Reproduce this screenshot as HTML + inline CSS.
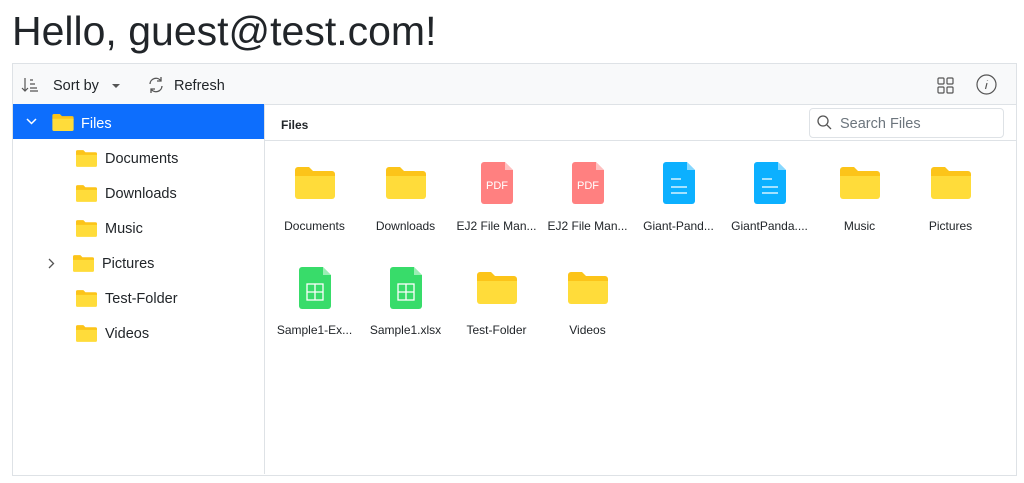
<!DOCTYPE html><html><head><style>
body{margin:0;width:1024px;height:483px;background:#fff;font-family:"Liberation Sans",sans-serif;position:relative;overflow:hidden}
.a{position:absolute}
h1{position:absolute;left:12px;top:7px;margin:0;font-size:41px;font-weight:400;color:#212529;line-height:48px}
.box{left:12px;top:63px;width:1003px;height:411px;border:1px solid #dee2e6}
.tb{left:13px;top:64px;width:1003px;height:40px;background:#f8f9fa;border-bottom:1px solid #dee2e6}
.t{font-size:14.5px;color:#212529}
.it{position:absolute;width:91px;text-align:center;font-size:12px;color:#212529}
.it svg{display:block;margin:0 auto}
</style></head><body>
<svg width="0" height="0" style="position:absolute"><defs>
<symbol id="f" viewBox="0 0 40 32"><path d="M0 3a3 3 0 0 1 3-3h11l4 4h19a3 3 0 0 1 3 3v4H0z" fill="#fcc419"/><path d="M0 9h40v20a3 3 0 0 1-3 3H3a3 3 0 0 1-3-3z" fill="#ffdc3a"/></symbol>
<symbol id="d" viewBox="0 0 32 42"><path d="M3 0h21l8 8v31a3 3 0 0 1-3 3H3a3 3 0 0 1-3-3V3a3 3 0 0 1 3-3z"/><path d="M24 0l8 8h-8z" fill="#fff" opacity=".5"/></symbol>
</defs></svg>
<h1>Hello, guest@test.com!</h1>
<div class="a box"></div>
<div class="a tb"></div>
<svg class="a" style="left:21px;top:77px" width="18" height="16" viewBox="0 0 18 16" fill="none" stroke="#555" stroke-width="1.2"><path d="M4 1v13M1 11l3 3 3-3M9 3h3M9 7h5M9 11h7M9 14h8"/></svg>
<div class="a t" style="left:53px;top:78px">Sort by</div>
<div class="a" style="left:112px;top:84px;border:4px solid transparent;border-top:4px solid #555;border-bottom:0"></div>
<svg class="a" style="left:147px;top:76px" width="18" height="18" viewBox="0 0 18 18" fill="none" stroke="#555" stroke-width="1.3"><path d="M3 8a6 6 0 0 1 11-3M15 10a6 6 0 0 1-11 3"/><path d="M14 1v4h-4M4 17v-4h4"/></svg>
<div class="a t" style="left:174px;top:78px">Refresh</div>
<svg class="a" style="left:937px;top:77px" width="17" height="17" viewBox="0 0 17 17" fill="none" stroke="#555" stroke-width="1.2"><rect x="1" y="1" width="6" height="6" rx="1"/><rect x="10" y="1" width="6" height="6" rx="1"/><rect x="1" y="10" width="6" height="6" rx="1"/><rect x="10" y="10" width="6" height="6" rx="1"/></svg>
<svg class="a" style="left:976px;top:74px" width="21" height="21" viewBox="0 0 21 21" fill="none" stroke="#555" stroke-width="1.2"><circle cx="10.5" cy="10.5" r="9.5"/><path d="M11 9l-1.5 6M11.5 6v.5"/></svg>
<div class="a" style="left:264px;top:104px;width:1px;height:370px;background:#dee2e6"></div>
<div class="a" style="left:13px;top:104px;width:251px;height:35px;background:#0d6efd"></div>
<svg class="a" style="left:26px;top:118px" width="11" height="7" viewBox="0 0 11 7" fill="none" stroke="#fff" stroke-width="1.5"><path d="M1 1l4.5 4.5L10 1"/></svg>
<svg class="a" style="left:52px;top:114px" width="22" height="17"><use href="#f"/></svg>
<div class="a t" style="left:81px;top:116px;color:#fff">Files</div>
<svg class="a" style="left:76px;top:150px" width="21" height="17"><use href="#f"/></svg><div class="a t" style="left:105px;top:151px">Documents</div>
<svg class="a" style="left:76px;top:185px" width="21" height="17"><use href="#f"/></svg><div class="a t" style="left:105px;top:186px">Downloads</div>
<svg class="a" style="left:76px;top:220px" width="21" height="17"><use href="#f"/></svg><div class="a t" style="left:105px;top:221px">Music</div>
<svg class="a" style="left:48px;top:258px" width="7" height="11" viewBox="0 0 7 11" fill="none" stroke="#555" stroke-width="1.3"><path d="M1 1l4.5 4.5L1 10"/></svg>
<svg class="a" style="left:73px;top:255px" width="21" height="17"><use href="#f"/></svg><div class="a t" style="left:102px;top:256px">Pictures</div>
<svg class="a" style="left:76px;top:290px" width="21" height="17"><use href="#f"/></svg><div class="a t" style="left:105px;top:291px">Test-Folder</div>
<svg class="a" style="left:76px;top:325px" width="21" height="17"><use href="#f"/></svg><div class="a t" style="left:105px;top:326px">Videos</div>
<div class="a" style="left:281px;top:118px;font-size:12px;font-weight:bold;color:#212529">Files</div>
<div class="a" style="left:809px;top:108px;width:193px;height:28px;border:1px solid #dee2e6;border-radius:4px"></div>
<svg class="a" style="left:817px;top:115px" width="15" height="15" viewBox="0 0 15 15" fill="none" stroke="#555" stroke-width="1.3"><circle cx="6" cy="6" r="5"/><path d="M10 10l4 4"/></svg>
<div class="a t" style="left:840px;top:116px;color:#6c757d">Search Files</div>
<div class="a" style="left:265px;top:140px;width:751px;height:1px;background:#dee2e6"></div>

<div class="it" style="left:269px;top:167px"><svg width="40" height="32"><use href="#f"/></svg><div style="margin-top:20px">Documents</div></div>
<div class="it" style="left:360px;top:167px"><svg width="40" height="32"><use href="#f"/></svg><div style="margin-top:20px">Downloads</div></div>
<div class="it" style="left:451px;top:162px"><svg width="32" height="42" fill="#ff8080"><use href="#d"/><text x="16" y="27" font-size="11" fill="#fff" text-anchor="middle" font-family="Liberation Sans">PDF</text></svg><div style="margin-top:15px">EJ2 File Man...</div></div>
<div class="it" style="left:542px;top:162px"><svg width="32" height="42" fill="#ff8080"><use href="#d"/><text x="16" y="27" font-size="11" fill="#fff" text-anchor="middle" font-family="Liberation Sans">PDF</text></svg><div style="margin-top:15px">EJ2 File Man...</div></div>
<div class="it" style="left:633px;top:162px"><svg width="32" height="42" fill="#0cb0ff"><use href="#d"/><path d="M8 17h10M8 25h16M8 31h16" stroke="#fff" stroke-width="1.3"/></svg><div style="margin-top:15px">Giant-Pand...</div></div>
<div class="it" style="left:724px;top:162px"><svg width="32" height="42" fill="#0cb0ff"><use href="#d"/><path d="M8 17h10M8 25h16M8 31h16" stroke="#fff" stroke-width="1.3"/></svg><div style="margin-top:15px">GiantPanda....</div></div>
<div class="it" style="left:814px;top:167px"><svg width="40" height="32"><use href="#f"/></svg><div style="margin-top:20px">Music</div></div>
<div class="it" style="left:905px;top:167px"><svg width="40" height="32"><use href="#f"/></svg><div style="margin-top:20px">Pictures</div></div>

<div class="it" style="left:269px;top:267px"><svg width="32" height="42" fill="#38dc6a"><use href="#d"/><rect x="8" y="17" width="16" height="16" fill="none" stroke="#fff" stroke-width="1.3"/><path d="M16 17v16M8 25h16" stroke="#fff" stroke-width="1.3"/></svg><div style="margin-top:14px">Sample1-Ex...</div></div>
<div class="it" style="left:360px;top:267px"><svg width="32" height="42" fill="#38dc6a"><use href="#d"/><rect x="8" y="17" width="16" height="16" fill="none" stroke="#fff" stroke-width="1.3"/><path d="M16 17v16M8 25h16" stroke="#fff" stroke-width="1.3"/></svg><div style="margin-top:14px">Sample1.xlsx</div></div>
<div class="it" style="left:451px;top:272px"><svg width="40" height="32"><use href="#f"/></svg><div style="margin-top:19px">Test-Folder</div></div>
<div class="it" style="left:542px;top:272px"><svg width="40" height="32"><use href="#f"/></svg><div style="margin-top:19px">Videos</div></div>
</body></html>
